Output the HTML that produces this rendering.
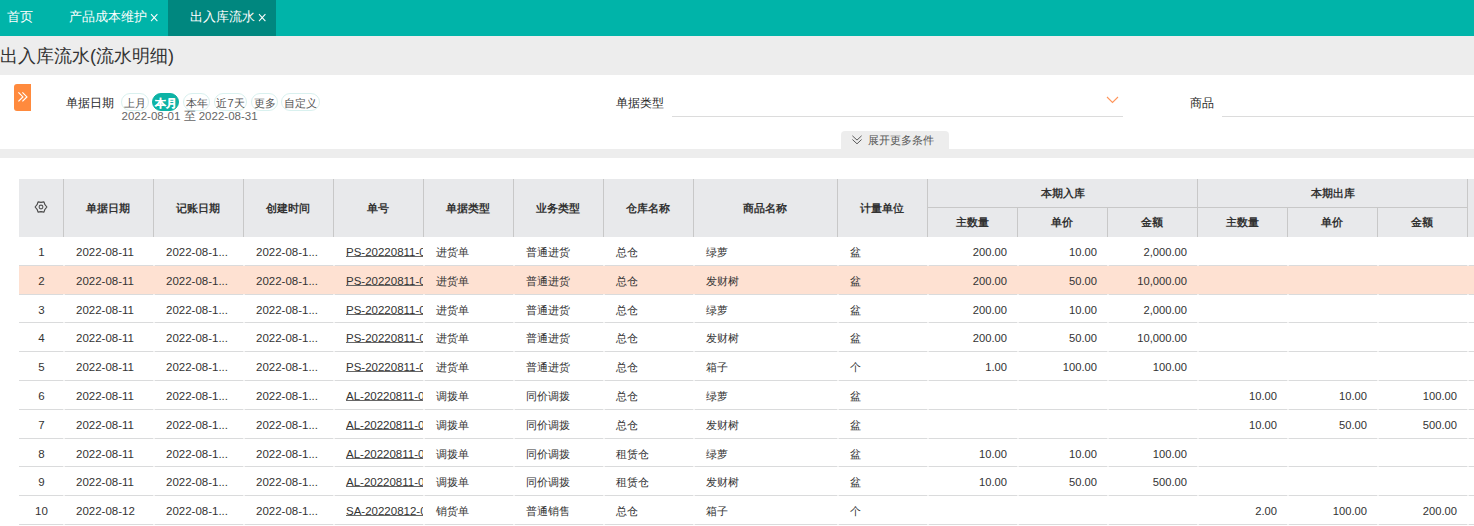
<!DOCTYPE html>
<html><head><meta charset="utf-8"><style>
*{box-sizing:border-box;margin:0;padding:0}
html,body{width:1474px;height:526px;overflow:hidden;background:#fff;font-family:"Liberation Sans",sans-serif;color:#333}
.a{position:absolute;white-space:nowrap}
.tabbar{position:absolute;left:0;top:0;width:1474px;height:36px;background:#00b4a9}
.tab{position:absolute;top:0;height:36px;color:#fff;font-size:13px;line-height:33px}
.x{position:absolute;top:0;color:#fff;font-size:13px;line-height:33px}
.titlebar{position:absolute;left:0;top:36px;width:1474px;height:39px;background:#ededed}
.title{position:absolute;left:0;top:43px;font-size:18px;line-height:26px;color:#333}
.lbl{position:absolute;font-size:11.5px;line-height:14px;color:#1f1f1f}
.pill{position:absolute;top:93px;height:18px;border:1px solid #d9f1ef;border-radius:9px;font-size:11px;line-height:18px;color:#555;text-align:center}
.pill.on{background:#0db3a5;border-color:#0db3a5;color:#fff;font-weight:bold;-webkit-text-stroke:0.2px #fff}
.uline{position:absolute;top:116px;height:1px;background:#dcdcdc}
.band{position:absolute;left:0;top:149px;width:1474px;height:9px;background:#ededed}
.more{position:absolute;left:841px;top:131px;width:108px;height:18px;background:#ededed;border-radius:4px 4px 0 0;font-size:10.5px;line-height:18px;color:#555}
.th{position:absolute;background:#e8e9eb;border-right:1px solid #c8c8c8;font-size:10.6px;font-weight:bold;color:#333;text-align:center;white-space:nowrap;overflow:hidden;padding-right:1px}
.td{position:absolute;font-size:11.5px;color:#333;white-space:nowrap;overflow:hidden;padding-left:12px;line-height:28px}
.td.c{text-align:center;padding-left:1px}
.td .k{font-size:10.5px}
.td.r{text-align:right;padding-left:0;padding-right:10px;font-size:11.2px}
.td u{text-decoration:underline;text-decoration-color:#666;text-underline-offset:0px}
.rb{position:absolute;height:1px;background:#dadbdc}
.hl{position:absolute;background:#fee1d2}
</style></head><body>
<div class="tabbar"></div>
<div class="tab" style="left:7px">首页</div>
<div class="tab" style="left:69px">产品成本维护</div><svg class="a" style="left:150px;top:13px" width="9" height="10"><path d="M1 1.2 L7.4 8.2 M7.4 1.2 L1 8.2" stroke="#fff" stroke-width="1.05"/></svg>
<div class="a" style="left:168px;top:0;width:108px;height:36px;background:#00877f"></div>
<div class="tab" style="left:190px">出入库流水</div><svg class="a" style="left:258px;top:13px" width="9" height="10"><path d="M1 1.2 L7.4 8.2 M7.4 1.2 L1 8.2" stroke="#fff" stroke-width="1.05"/></svg>
<div class="titlebar"></div>
<div class="title">出入库流水(流水明细)</div>
<div class="a" style="left:14px;top:84px;width:17px;height:27px;background:#ff8a3d;border-radius:3px 0 0 3px"></div>
<svg class="a" style="left:14px;top:84px" width="17" height="27"><path d="M4.4 8.4 L8.9 12.9 L4.4 17.4 M8.4 8.4 L12.9 12.9 L8.4 17.4" stroke="#fff" stroke-width="1.2" fill="none"/></svg>
<div class="lbl" style="left:66px;top:95.5px">单据日期</div>
<div class="pill" style="left:121px;width:28px">上月</div>
<div class="pill on" style="left:152px;width:27px">本月</div>
<div class="pill" style="left:183px;width:27px">本年</div>
<div class="pill" style="left:214px;width:33px">近7天</div>
<div class="pill" style="left:251px;width:27px">更多</div>
<div class="pill" style="left:281px;width:39px">自定义</div>
<div class="lbl" style="left:121.5px;top:108.5px;color:#666;font-size:11.5px">2022-08-01 至 2022-08-31</div>
<div class="lbl" style="left:616px;top:95.5px">单据类型</div>
<div class="uline" style="left:672px;width:451px"></div>
<svg class="a" style="left:1105px;top:94px" width="15" height="12"><path d="M2 3 L7.5 8.5 L13 3" stroke="#ff955a" stroke-width="1.1" fill="none"/></svg>
<div class="lbl" style="left:1190px;top:95.5px">商品</div>
<div class="uline" style="left:1222px;width:252px"></div>
<div class="more"><svg class="a" style="left:9px;top:3px" width="14" height="12"><path d="M2.4 1.8 L7 6.1 L11.6 1.8 M2.4 5.5 L7 9.8 L11.6 5.5" stroke="#5a5a5a" stroke-width="1" fill="none"/></svg><span class="a" style="left:27px;top:0">展开更多条件</span></div>
<div class="band"></div>

<div class="th" style="left:19px;top:179px;width:45px;height:58px;line-height:58px"><svg width="20" height="20" style="position:absolute;left:12px;top:18px"><path d="M15.90 10.00 L13.95 12.28 L12.95 15.11 L10.00 14.56 L7.05 15.11 L6.05 12.28 L4.10 10.00 L6.05 7.72 L7.05 4.89 L10.00 5.44 L12.95 4.89 L13.95 7.72 Z" stroke="#4a4a4a" stroke-width="1.15" fill="none" stroke-linejoin="round"/><circle cx="10" cy="10" r="1.9" stroke="#555" stroke-width="1.1" fill="none"/></svg></div>
<div class="th" style="left:64px;top:179px;width:90px;height:58px;line-height:58px">单据日期</div>
<div class="th" style="left:154px;top:179px;width:90px;height:58px;line-height:58px">记账日期</div>
<div class="th" style="left:244px;top:179px;width:90px;height:58px;line-height:58px">创建时间</div>
<div class="th" style="left:334px;top:179px;width:90px;height:58px;line-height:58px">单号</div>
<div class="th" style="left:424px;top:179px;width:90px;height:58px;line-height:58px">单据类型</div>
<div class="th" style="left:514px;top:179px;width:90px;height:58px;line-height:58px">业务类型</div>
<div class="th" style="left:604px;top:179px;width:90px;height:58px;line-height:58px">仓库名称</div>
<div class="th" style="left:694px;top:179px;width:144px;height:58px;line-height:58px">商品名称</div>
<div class="th" style="left:838px;top:179px;width:90px;height:58px;line-height:58px">计量单位</div>
<div class="th" style="left:928px;top:179px;width:270px;height:29px;line-height:28px;border-bottom:1px solid #c8c8c8;padding-right:0">本期入库</div>
<div class="th" style="left:928px;top:208px;width:90px;height:29px;line-height:29px">主数量</div>
<div class="th" style="left:1018px;top:208px;width:90px;height:29px;line-height:29px">单价</div>
<div class="th" style="left:1108px;top:208px;width:90px;height:29px;line-height:29px">金额</div>
<div class="th" style="left:1198px;top:179px;width:270px;height:29px;line-height:28px;border-bottom:1px solid #c8c8c8;padding-right:0">本期出库</div>
<div class="th" style="left:1198px;top:208px;width:90px;height:29px;line-height:29px">主数量</div>
<div class="th" style="left:1288px;top:208px;width:90px;height:29px;line-height:29px">单价</div>
<div class="th" style="left:1378px;top:208px;width:90px;height:29px;line-height:29px">金额</div>
<div class="th" style="left:1468px;top:179px;width:92px;height:58px"></div>
<div class="td c" style="left:19px;top:237px;width:44px;height:28px;line-height:30px">1</div>
<div class="td" style="left:64px;top:237px;width:89px;height:28px;line-height:30px">2022-08-11</div>
<div class="td" style="left:154px;top:237px;width:89px;height:28px;line-height:30px">2022-08-1...</div>
<div class="td" style="left:244px;top:237px;width:89px;height:28px;line-height:30px">2022-08-1...</div>
<div class="td" style="left:334px;top:237px;width:89px;height:28px;line-height:30px"><u>PS-20220811-0001</u></div>
<div class="td" style="left:424px;top:237px;width:89px;height:28px;line-height:30px"><span class="k">进货单</span></div>
<div class="td" style="left:514px;top:237px;width:89px;height:28px;line-height:30px"><span class="k">普通进货</span></div>
<div class="td" style="left:604px;top:237px;width:89px;height:28px;line-height:30px"><span class="k">总仓</span></div>
<div class="td" style="left:694px;top:237px;width:143px;height:28px;line-height:30px"><span class="k">绿萝</span></div>
<div class="td" style="left:838px;top:237px;width:89px;height:28px;line-height:30px"><span class="k">盆</span></div>
<div class="td r" style="left:928px;top:237px;width:89px;height:28px;line-height:30px">200.00</div>
<div class="td r" style="left:1018px;top:237px;width:89px;height:28px;line-height:30px">10.00</div>
<div class="td r" style="left:1108px;top:237px;width:89px;height:28px;line-height:30px">2,000.00</div>
<div class="td r" style="left:1198px;top:237px;width:89px;height:28px;line-height:30px"></div>
<div class="td r" style="left:1288px;top:237px;width:89px;height:28px;line-height:30px"></div>
<div class="td r" style="left:1378px;top:237px;width:89px;height:28px;line-height:30px"></div>
<div class="rb" style="left:19px;top:265px;width:1455px;background:#f1f1f1"></div>
<div class="rb" style="left:19px;top:265px;width:44px"></div>
<div class="rb" style="left:65px;top:265px;width:88px"></div>
<div class="rb" style="left:155px;top:265px;width:88px"></div>
<div class="rb" style="left:245px;top:265px;width:88px"></div>
<div class="rb" style="left:335px;top:265px;width:88px"></div>
<div class="rb" style="left:425px;top:265px;width:88px"></div>
<div class="rb" style="left:515px;top:265px;width:88px"></div>
<div class="rb" style="left:605px;top:265px;width:88px"></div>
<div class="rb" style="left:695px;top:265px;width:142px"></div>
<div class="rb" style="left:839px;top:265px;width:88px"></div>
<div class="rb" style="left:929px;top:265px;width:88px"></div>
<div class="rb" style="left:1019px;top:265px;width:88px"></div>
<div class="rb" style="left:1109px;top:265px;width:88px"></div>
<div class="rb" style="left:1199px;top:265px;width:88px"></div>
<div class="rb" style="left:1289px;top:265px;width:88px"></div>
<div class="rb" style="left:1379px;top:265px;width:88px"></div>
<div class="rb" style="left:1469px;top:265px;width:90px"></div>
<div class="hl" style="left:19px;top:266px;width:1455px;height:28px"></div>
<div class="td c" style="left:19px;top:266px;width:44px;height:28px;line-height:30px">2</div>
<div class="td" style="left:64px;top:266px;width:89px;height:28px;line-height:30px">2022-08-11</div>
<div class="td" style="left:154px;top:266px;width:89px;height:28px;line-height:30px">2022-08-1...</div>
<div class="td" style="left:244px;top:266px;width:89px;height:28px;line-height:30px">2022-08-1...</div>
<div class="td" style="left:334px;top:266px;width:89px;height:28px;line-height:30px"><u>PS-20220811-0002</u></div>
<div class="td" style="left:424px;top:266px;width:89px;height:28px;line-height:30px"><span class="k">进货单</span></div>
<div class="td" style="left:514px;top:266px;width:89px;height:28px;line-height:30px"><span class="k">普通进货</span></div>
<div class="td" style="left:604px;top:266px;width:89px;height:28px;line-height:30px"><span class="k">总仓</span></div>
<div class="td" style="left:694px;top:266px;width:143px;height:28px;line-height:30px"><span class="k">发财树</span></div>
<div class="td" style="left:838px;top:266px;width:89px;height:28px;line-height:30px"><span class="k">盆</span></div>
<div class="td r" style="left:928px;top:266px;width:89px;height:28px;line-height:30px">200.00</div>
<div class="td r" style="left:1018px;top:266px;width:89px;height:28px;line-height:30px">50.00</div>
<div class="td r" style="left:1108px;top:266px;width:89px;height:28px;line-height:30px">10,000.00</div>
<div class="td r" style="left:1198px;top:266px;width:89px;height:28px;line-height:30px"></div>
<div class="td r" style="left:1288px;top:266px;width:89px;height:28px;line-height:30px"></div>
<div class="td r" style="left:1378px;top:266px;width:89px;height:28px;line-height:30px"></div>
<div class="rb" style="left:19px;top:294px;width:1455px;background:#f1f1f1"></div>
<div class="rb" style="left:19px;top:294px;width:44px"></div>
<div class="rb" style="left:65px;top:294px;width:88px"></div>
<div class="rb" style="left:155px;top:294px;width:88px"></div>
<div class="rb" style="left:245px;top:294px;width:88px"></div>
<div class="rb" style="left:335px;top:294px;width:88px"></div>
<div class="rb" style="left:425px;top:294px;width:88px"></div>
<div class="rb" style="left:515px;top:294px;width:88px"></div>
<div class="rb" style="left:605px;top:294px;width:88px"></div>
<div class="rb" style="left:695px;top:294px;width:142px"></div>
<div class="rb" style="left:839px;top:294px;width:88px"></div>
<div class="rb" style="left:929px;top:294px;width:88px"></div>
<div class="rb" style="left:1019px;top:294px;width:88px"></div>
<div class="rb" style="left:1109px;top:294px;width:88px"></div>
<div class="rb" style="left:1199px;top:294px;width:88px"></div>
<div class="rb" style="left:1289px;top:294px;width:88px"></div>
<div class="rb" style="left:1379px;top:294px;width:88px"></div>
<div class="rb" style="left:1469px;top:294px;width:90px"></div>
<div class="td c" style="left:19px;top:295px;width:44px;height:27px;line-height:30px">3</div>
<div class="td" style="left:64px;top:295px;width:89px;height:27px;line-height:30px">2022-08-11</div>
<div class="td" style="left:154px;top:295px;width:89px;height:27px;line-height:30px">2022-08-1...</div>
<div class="td" style="left:244px;top:295px;width:89px;height:27px;line-height:30px">2022-08-1...</div>
<div class="td" style="left:334px;top:295px;width:89px;height:27px;line-height:30px"><u>PS-20220811-0003</u></div>
<div class="td" style="left:424px;top:295px;width:89px;height:27px;line-height:30px"><span class="k">进货单</span></div>
<div class="td" style="left:514px;top:295px;width:89px;height:27px;line-height:30px"><span class="k">普通进货</span></div>
<div class="td" style="left:604px;top:295px;width:89px;height:27px;line-height:30px"><span class="k">总仓</span></div>
<div class="td" style="left:694px;top:295px;width:143px;height:27px;line-height:30px"><span class="k">绿萝</span></div>
<div class="td" style="left:838px;top:295px;width:89px;height:27px;line-height:30px"><span class="k">盆</span></div>
<div class="td r" style="left:928px;top:295px;width:89px;height:27px;line-height:30px">200.00</div>
<div class="td r" style="left:1018px;top:295px;width:89px;height:27px;line-height:30px">10.00</div>
<div class="td r" style="left:1108px;top:295px;width:89px;height:27px;line-height:30px">2,000.00</div>
<div class="td r" style="left:1198px;top:295px;width:89px;height:27px;line-height:30px"></div>
<div class="td r" style="left:1288px;top:295px;width:89px;height:27px;line-height:30px"></div>
<div class="td r" style="left:1378px;top:295px;width:89px;height:27px;line-height:30px"></div>
<div class="rb" style="left:19px;top:322px;width:1455px;background:#f1f1f1"></div>
<div class="rb" style="left:19px;top:322px;width:44px"></div>
<div class="rb" style="left:65px;top:322px;width:88px"></div>
<div class="rb" style="left:155px;top:322px;width:88px"></div>
<div class="rb" style="left:245px;top:322px;width:88px"></div>
<div class="rb" style="left:335px;top:322px;width:88px"></div>
<div class="rb" style="left:425px;top:322px;width:88px"></div>
<div class="rb" style="left:515px;top:322px;width:88px"></div>
<div class="rb" style="left:605px;top:322px;width:88px"></div>
<div class="rb" style="left:695px;top:322px;width:142px"></div>
<div class="rb" style="left:839px;top:322px;width:88px"></div>
<div class="rb" style="left:929px;top:322px;width:88px"></div>
<div class="rb" style="left:1019px;top:322px;width:88px"></div>
<div class="rb" style="left:1109px;top:322px;width:88px"></div>
<div class="rb" style="left:1199px;top:322px;width:88px"></div>
<div class="rb" style="left:1289px;top:322px;width:88px"></div>
<div class="rb" style="left:1379px;top:322px;width:88px"></div>
<div class="rb" style="left:1469px;top:322px;width:90px"></div>
<div class="td c" style="left:19px;top:323px;width:44px;height:28px;line-height:30px">4</div>
<div class="td" style="left:64px;top:323px;width:89px;height:28px;line-height:30px">2022-08-11</div>
<div class="td" style="left:154px;top:323px;width:89px;height:28px;line-height:30px">2022-08-1...</div>
<div class="td" style="left:244px;top:323px;width:89px;height:28px;line-height:30px">2022-08-1...</div>
<div class="td" style="left:334px;top:323px;width:89px;height:28px;line-height:30px"><u>PS-20220811-0004</u></div>
<div class="td" style="left:424px;top:323px;width:89px;height:28px;line-height:30px"><span class="k">进货单</span></div>
<div class="td" style="left:514px;top:323px;width:89px;height:28px;line-height:30px"><span class="k">普通进货</span></div>
<div class="td" style="left:604px;top:323px;width:89px;height:28px;line-height:30px"><span class="k">总仓</span></div>
<div class="td" style="left:694px;top:323px;width:143px;height:28px;line-height:30px"><span class="k">发财树</span></div>
<div class="td" style="left:838px;top:323px;width:89px;height:28px;line-height:30px"><span class="k">盆</span></div>
<div class="td r" style="left:928px;top:323px;width:89px;height:28px;line-height:30px">200.00</div>
<div class="td r" style="left:1018px;top:323px;width:89px;height:28px;line-height:30px">50.00</div>
<div class="td r" style="left:1108px;top:323px;width:89px;height:28px;line-height:30px">10,000.00</div>
<div class="td r" style="left:1198px;top:323px;width:89px;height:28px;line-height:30px"></div>
<div class="td r" style="left:1288px;top:323px;width:89px;height:28px;line-height:30px"></div>
<div class="td r" style="left:1378px;top:323px;width:89px;height:28px;line-height:30px"></div>
<div class="rb" style="left:19px;top:351px;width:1455px;background:#f1f1f1"></div>
<div class="rb" style="left:19px;top:351px;width:44px"></div>
<div class="rb" style="left:65px;top:351px;width:88px"></div>
<div class="rb" style="left:155px;top:351px;width:88px"></div>
<div class="rb" style="left:245px;top:351px;width:88px"></div>
<div class="rb" style="left:335px;top:351px;width:88px"></div>
<div class="rb" style="left:425px;top:351px;width:88px"></div>
<div class="rb" style="left:515px;top:351px;width:88px"></div>
<div class="rb" style="left:605px;top:351px;width:88px"></div>
<div class="rb" style="left:695px;top:351px;width:142px"></div>
<div class="rb" style="left:839px;top:351px;width:88px"></div>
<div class="rb" style="left:929px;top:351px;width:88px"></div>
<div class="rb" style="left:1019px;top:351px;width:88px"></div>
<div class="rb" style="left:1109px;top:351px;width:88px"></div>
<div class="rb" style="left:1199px;top:351px;width:88px"></div>
<div class="rb" style="left:1289px;top:351px;width:88px"></div>
<div class="rb" style="left:1379px;top:351px;width:88px"></div>
<div class="rb" style="left:1469px;top:351px;width:90px"></div>
<div class="td c" style="left:19px;top:352px;width:44px;height:28px;line-height:30px">5</div>
<div class="td" style="left:64px;top:352px;width:89px;height:28px;line-height:30px">2022-08-11</div>
<div class="td" style="left:154px;top:352px;width:89px;height:28px;line-height:30px">2022-08-1...</div>
<div class="td" style="left:244px;top:352px;width:89px;height:28px;line-height:30px">2022-08-1...</div>
<div class="td" style="left:334px;top:352px;width:89px;height:28px;line-height:30px"><u>PS-20220811-0005</u></div>
<div class="td" style="left:424px;top:352px;width:89px;height:28px;line-height:30px"><span class="k">进货单</span></div>
<div class="td" style="left:514px;top:352px;width:89px;height:28px;line-height:30px"><span class="k">普通进货</span></div>
<div class="td" style="left:604px;top:352px;width:89px;height:28px;line-height:30px"><span class="k">总仓</span></div>
<div class="td" style="left:694px;top:352px;width:143px;height:28px;line-height:30px"><span class="k">箱子</span></div>
<div class="td" style="left:838px;top:352px;width:89px;height:28px;line-height:30px"><span class="k">个</span></div>
<div class="td r" style="left:928px;top:352px;width:89px;height:28px;line-height:30px">1.00</div>
<div class="td r" style="left:1018px;top:352px;width:89px;height:28px;line-height:30px">100.00</div>
<div class="td r" style="left:1108px;top:352px;width:89px;height:28px;line-height:30px">100.00</div>
<div class="td r" style="left:1198px;top:352px;width:89px;height:28px;line-height:30px"></div>
<div class="td r" style="left:1288px;top:352px;width:89px;height:28px;line-height:30px"></div>
<div class="td r" style="left:1378px;top:352px;width:89px;height:28px;line-height:30px"></div>
<div class="rb" style="left:19px;top:380px;width:1455px;background:#f1f1f1"></div>
<div class="rb" style="left:19px;top:380px;width:44px"></div>
<div class="rb" style="left:65px;top:380px;width:88px"></div>
<div class="rb" style="left:155px;top:380px;width:88px"></div>
<div class="rb" style="left:245px;top:380px;width:88px"></div>
<div class="rb" style="left:335px;top:380px;width:88px"></div>
<div class="rb" style="left:425px;top:380px;width:88px"></div>
<div class="rb" style="left:515px;top:380px;width:88px"></div>
<div class="rb" style="left:605px;top:380px;width:88px"></div>
<div class="rb" style="left:695px;top:380px;width:142px"></div>
<div class="rb" style="left:839px;top:380px;width:88px"></div>
<div class="rb" style="left:929px;top:380px;width:88px"></div>
<div class="rb" style="left:1019px;top:380px;width:88px"></div>
<div class="rb" style="left:1109px;top:380px;width:88px"></div>
<div class="rb" style="left:1199px;top:380px;width:88px"></div>
<div class="rb" style="left:1289px;top:380px;width:88px"></div>
<div class="rb" style="left:1379px;top:380px;width:88px"></div>
<div class="rb" style="left:1469px;top:380px;width:90px"></div>
<div class="td c" style="left:19px;top:381px;width:44px;height:28px;line-height:30px">6</div>
<div class="td" style="left:64px;top:381px;width:89px;height:28px;line-height:30px">2022-08-11</div>
<div class="td" style="left:154px;top:381px;width:89px;height:28px;line-height:30px">2022-08-1...</div>
<div class="td" style="left:244px;top:381px;width:89px;height:28px;line-height:30px">2022-08-1...</div>
<div class="td" style="left:334px;top:381px;width:89px;height:28px;line-height:30px"><u>AL-20220811-0001</u></div>
<div class="td" style="left:424px;top:381px;width:89px;height:28px;line-height:30px"><span class="k">调拨单</span></div>
<div class="td" style="left:514px;top:381px;width:89px;height:28px;line-height:30px"><span class="k">同价调拨</span></div>
<div class="td" style="left:604px;top:381px;width:89px;height:28px;line-height:30px"><span class="k">总仓</span></div>
<div class="td" style="left:694px;top:381px;width:143px;height:28px;line-height:30px"><span class="k">绿萝</span></div>
<div class="td" style="left:838px;top:381px;width:89px;height:28px;line-height:30px"><span class="k">盆</span></div>
<div class="td r" style="left:928px;top:381px;width:89px;height:28px;line-height:30px"></div>
<div class="td r" style="left:1018px;top:381px;width:89px;height:28px;line-height:30px"></div>
<div class="td r" style="left:1108px;top:381px;width:89px;height:28px;line-height:30px"></div>
<div class="td r" style="left:1198px;top:381px;width:89px;height:28px;line-height:30px">10.00</div>
<div class="td r" style="left:1288px;top:381px;width:89px;height:28px;line-height:30px">10.00</div>
<div class="td r" style="left:1378px;top:381px;width:89px;height:28px;line-height:30px">100.00</div>
<div class="rb" style="left:19px;top:409px;width:1455px;background:#f1f1f1"></div>
<div class="rb" style="left:19px;top:409px;width:44px"></div>
<div class="rb" style="left:65px;top:409px;width:88px"></div>
<div class="rb" style="left:155px;top:409px;width:88px"></div>
<div class="rb" style="left:245px;top:409px;width:88px"></div>
<div class="rb" style="left:335px;top:409px;width:88px"></div>
<div class="rb" style="left:425px;top:409px;width:88px"></div>
<div class="rb" style="left:515px;top:409px;width:88px"></div>
<div class="rb" style="left:605px;top:409px;width:88px"></div>
<div class="rb" style="left:695px;top:409px;width:142px"></div>
<div class="rb" style="left:839px;top:409px;width:88px"></div>
<div class="rb" style="left:929px;top:409px;width:88px"></div>
<div class="rb" style="left:1019px;top:409px;width:88px"></div>
<div class="rb" style="left:1109px;top:409px;width:88px"></div>
<div class="rb" style="left:1199px;top:409px;width:88px"></div>
<div class="rb" style="left:1289px;top:409px;width:88px"></div>
<div class="rb" style="left:1379px;top:409px;width:88px"></div>
<div class="rb" style="left:1469px;top:409px;width:90px"></div>
<div class="td c" style="left:19px;top:410px;width:44px;height:28px;line-height:30px">7</div>
<div class="td" style="left:64px;top:410px;width:89px;height:28px;line-height:30px">2022-08-11</div>
<div class="td" style="left:154px;top:410px;width:89px;height:28px;line-height:30px">2022-08-1...</div>
<div class="td" style="left:244px;top:410px;width:89px;height:28px;line-height:30px">2022-08-1...</div>
<div class="td" style="left:334px;top:410px;width:89px;height:28px;line-height:30px"><u>AL-20220811-0002</u></div>
<div class="td" style="left:424px;top:410px;width:89px;height:28px;line-height:30px"><span class="k">调拨单</span></div>
<div class="td" style="left:514px;top:410px;width:89px;height:28px;line-height:30px"><span class="k">同价调拨</span></div>
<div class="td" style="left:604px;top:410px;width:89px;height:28px;line-height:30px"><span class="k">总仓</span></div>
<div class="td" style="left:694px;top:410px;width:143px;height:28px;line-height:30px"><span class="k">发财树</span></div>
<div class="td" style="left:838px;top:410px;width:89px;height:28px;line-height:30px"><span class="k">盆</span></div>
<div class="td r" style="left:928px;top:410px;width:89px;height:28px;line-height:30px"></div>
<div class="td r" style="left:1018px;top:410px;width:89px;height:28px;line-height:30px"></div>
<div class="td r" style="left:1108px;top:410px;width:89px;height:28px;line-height:30px"></div>
<div class="td r" style="left:1198px;top:410px;width:89px;height:28px;line-height:30px">10.00</div>
<div class="td r" style="left:1288px;top:410px;width:89px;height:28px;line-height:30px">50.00</div>
<div class="td r" style="left:1378px;top:410px;width:89px;height:28px;line-height:30px">500.00</div>
<div class="rb" style="left:19px;top:438px;width:1455px;background:#f1f1f1"></div>
<div class="rb" style="left:19px;top:438px;width:44px"></div>
<div class="rb" style="left:65px;top:438px;width:88px"></div>
<div class="rb" style="left:155px;top:438px;width:88px"></div>
<div class="rb" style="left:245px;top:438px;width:88px"></div>
<div class="rb" style="left:335px;top:438px;width:88px"></div>
<div class="rb" style="left:425px;top:438px;width:88px"></div>
<div class="rb" style="left:515px;top:438px;width:88px"></div>
<div class="rb" style="left:605px;top:438px;width:88px"></div>
<div class="rb" style="left:695px;top:438px;width:142px"></div>
<div class="rb" style="left:839px;top:438px;width:88px"></div>
<div class="rb" style="left:929px;top:438px;width:88px"></div>
<div class="rb" style="left:1019px;top:438px;width:88px"></div>
<div class="rb" style="left:1109px;top:438px;width:88px"></div>
<div class="rb" style="left:1199px;top:438px;width:88px"></div>
<div class="rb" style="left:1289px;top:438px;width:88px"></div>
<div class="rb" style="left:1379px;top:438px;width:88px"></div>
<div class="rb" style="left:1469px;top:438px;width:90px"></div>
<div class="td c" style="left:19px;top:439px;width:44px;height:27px;line-height:30px">8</div>
<div class="td" style="left:64px;top:439px;width:89px;height:27px;line-height:30px">2022-08-11</div>
<div class="td" style="left:154px;top:439px;width:89px;height:27px;line-height:30px">2022-08-1...</div>
<div class="td" style="left:244px;top:439px;width:89px;height:27px;line-height:30px">2022-08-1...</div>
<div class="td" style="left:334px;top:439px;width:89px;height:27px;line-height:30px"><u>AL-20220811-0001</u></div>
<div class="td" style="left:424px;top:439px;width:89px;height:27px;line-height:30px"><span class="k">调拨单</span></div>
<div class="td" style="left:514px;top:439px;width:89px;height:27px;line-height:30px"><span class="k">同价调拨</span></div>
<div class="td" style="left:604px;top:439px;width:89px;height:27px;line-height:30px"><span class="k">租赁仓</span></div>
<div class="td" style="left:694px;top:439px;width:143px;height:27px;line-height:30px"><span class="k">绿萝</span></div>
<div class="td" style="left:838px;top:439px;width:89px;height:27px;line-height:30px"><span class="k">盆</span></div>
<div class="td r" style="left:928px;top:439px;width:89px;height:27px;line-height:30px">10.00</div>
<div class="td r" style="left:1018px;top:439px;width:89px;height:27px;line-height:30px">10.00</div>
<div class="td r" style="left:1108px;top:439px;width:89px;height:27px;line-height:30px">100.00</div>
<div class="td r" style="left:1198px;top:439px;width:89px;height:27px;line-height:30px"></div>
<div class="td r" style="left:1288px;top:439px;width:89px;height:27px;line-height:30px"></div>
<div class="td r" style="left:1378px;top:439px;width:89px;height:27px;line-height:30px"></div>
<div class="rb" style="left:19px;top:466px;width:1455px;background:#f1f1f1"></div>
<div class="rb" style="left:19px;top:466px;width:44px"></div>
<div class="rb" style="left:65px;top:466px;width:88px"></div>
<div class="rb" style="left:155px;top:466px;width:88px"></div>
<div class="rb" style="left:245px;top:466px;width:88px"></div>
<div class="rb" style="left:335px;top:466px;width:88px"></div>
<div class="rb" style="left:425px;top:466px;width:88px"></div>
<div class="rb" style="left:515px;top:466px;width:88px"></div>
<div class="rb" style="left:605px;top:466px;width:88px"></div>
<div class="rb" style="left:695px;top:466px;width:142px"></div>
<div class="rb" style="left:839px;top:466px;width:88px"></div>
<div class="rb" style="left:929px;top:466px;width:88px"></div>
<div class="rb" style="left:1019px;top:466px;width:88px"></div>
<div class="rb" style="left:1109px;top:466px;width:88px"></div>
<div class="rb" style="left:1199px;top:466px;width:88px"></div>
<div class="rb" style="left:1289px;top:466px;width:88px"></div>
<div class="rb" style="left:1379px;top:466px;width:88px"></div>
<div class="rb" style="left:1469px;top:466px;width:90px"></div>
<div class="td c" style="left:19px;top:467px;width:44px;height:28px;line-height:30px">9</div>
<div class="td" style="left:64px;top:467px;width:89px;height:28px;line-height:30px">2022-08-11</div>
<div class="td" style="left:154px;top:467px;width:89px;height:28px;line-height:30px">2022-08-1...</div>
<div class="td" style="left:244px;top:467px;width:89px;height:28px;line-height:30px">2022-08-1...</div>
<div class="td" style="left:334px;top:467px;width:89px;height:28px;line-height:30px"><u>AL-20220811-0002</u></div>
<div class="td" style="left:424px;top:467px;width:89px;height:28px;line-height:30px"><span class="k">调拨单</span></div>
<div class="td" style="left:514px;top:467px;width:89px;height:28px;line-height:30px"><span class="k">同价调拨</span></div>
<div class="td" style="left:604px;top:467px;width:89px;height:28px;line-height:30px"><span class="k">租赁仓</span></div>
<div class="td" style="left:694px;top:467px;width:143px;height:28px;line-height:30px"><span class="k">发财树</span></div>
<div class="td" style="left:838px;top:467px;width:89px;height:28px;line-height:30px"><span class="k">盆</span></div>
<div class="td r" style="left:928px;top:467px;width:89px;height:28px;line-height:30px">10.00</div>
<div class="td r" style="left:1018px;top:467px;width:89px;height:28px;line-height:30px">50.00</div>
<div class="td r" style="left:1108px;top:467px;width:89px;height:28px;line-height:30px">500.00</div>
<div class="td r" style="left:1198px;top:467px;width:89px;height:28px;line-height:30px"></div>
<div class="td r" style="left:1288px;top:467px;width:89px;height:28px;line-height:30px"></div>
<div class="td r" style="left:1378px;top:467px;width:89px;height:28px;line-height:30px"></div>
<div class="rb" style="left:19px;top:495px;width:1455px;background:#f1f1f1"></div>
<div class="rb" style="left:19px;top:495px;width:44px"></div>
<div class="rb" style="left:65px;top:495px;width:88px"></div>
<div class="rb" style="left:155px;top:495px;width:88px"></div>
<div class="rb" style="left:245px;top:495px;width:88px"></div>
<div class="rb" style="left:335px;top:495px;width:88px"></div>
<div class="rb" style="left:425px;top:495px;width:88px"></div>
<div class="rb" style="left:515px;top:495px;width:88px"></div>
<div class="rb" style="left:605px;top:495px;width:88px"></div>
<div class="rb" style="left:695px;top:495px;width:142px"></div>
<div class="rb" style="left:839px;top:495px;width:88px"></div>
<div class="rb" style="left:929px;top:495px;width:88px"></div>
<div class="rb" style="left:1019px;top:495px;width:88px"></div>
<div class="rb" style="left:1109px;top:495px;width:88px"></div>
<div class="rb" style="left:1199px;top:495px;width:88px"></div>
<div class="rb" style="left:1289px;top:495px;width:88px"></div>
<div class="rb" style="left:1379px;top:495px;width:88px"></div>
<div class="rb" style="left:1469px;top:495px;width:90px"></div>
<div class="td c" style="left:19px;top:496px;width:44px;height:28px;line-height:30px">10</div>
<div class="td" style="left:64px;top:496px;width:89px;height:28px;line-height:30px">2022-08-12</div>
<div class="td" style="left:154px;top:496px;width:89px;height:28px;line-height:30px">2022-08-1...</div>
<div class="td" style="left:244px;top:496px;width:89px;height:28px;line-height:30px">2022-08-1...</div>
<div class="td" style="left:334px;top:496px;width:89px;height:28px;line-height:30px"><u>SA-20220812-0001</u></div>
<div class="td" style="left:424px;top:496px;width:89px;height:28px;line-height:30px"><span class="k">销货单</span></div>
<div class="td" style="left:514px;top:496px;width:89px;height:28px;line-height:30px"><span class="k">普通销售</span></div>
<div class="td" style="left:604px;top:496px;width:89px;height:28px;line-height:30px"><span class="k">总仓</span></div>
<div class="td" style="left:694px;top:496px;width:143px;height:28px;line-height:30px"><span class="k">箱子</span></div>
<div class="td" style="left:838px;top:496px;width:89px;height:28px;line-height:30px"><span class="k">个</span></div>
<div class="td r" style="left:928px;top:496px;width:89px;height:28px;line-height:30px"></div>
<div class="td r" style="left:1018px;top:496px;width:89px;height:28px;line-height:30px"></div>
<div class="td r" style="left:1108px;top:496px;width:89px;height:28px;line-height:30px"></div>
<div class="td r" style="left:1198px;top:496px;width:89px;height:28px;line-height:30px">2.00</div>
<div class="td r" style="left:1288px;top:496px;width:89px;height:28px;line-height:30px">100.00</div>
<div class="td r" style="left:1378px;top:496px;width:89px;height:28px;line-height:30px">200.00</div>
<div class="rb" style="left:19px;top:524px;width:1455px;background:#f1f1f1"></div>
<div class="rb" style="left:19px;top:524px;width:44px"></div>
<div class="rb" style="left:65px;top:524px;width:88px"></div>
<div class="rb" style="left:155px;top:524px;width:88px"></div>
<div class="rb" style="left:245px;top:524px;width:88px"></div>
<div class="rb" style="left:335px;top:524px;width:88px"></div>
<div class="rb" style="left:425px;top:524px;width:88px"></div>
<div class="rb" style="left:515px;top:524px;width:88px"></div>
<div class="rb" style="left:605px;top:524px;width:88px"></div>
<div class="rb" style="left:695px;top:524px;width:142px"></div>
<div class="rb" style="left:839px;top:524px;width:88px"></div>
<div class="rb" style="left:929px;top:524px;width:88px"></div>
<div class="rb" style="left:1019px;top:524px;width:88px"></div>
<div class="rb" style="left:1109px;top:524px;width:88px"></div>
<div class="rb" style="left:1199px;top:524px;width:88px"></div>
<div class="rb" style="left:1289px;top:524px;width:88px"></div>
<div class="rb" style="left:1379px;top:524px;width:88px"></div>
<div class="rb" style="left:1469px;top:524px;width:90px"></div>
</body></html>
